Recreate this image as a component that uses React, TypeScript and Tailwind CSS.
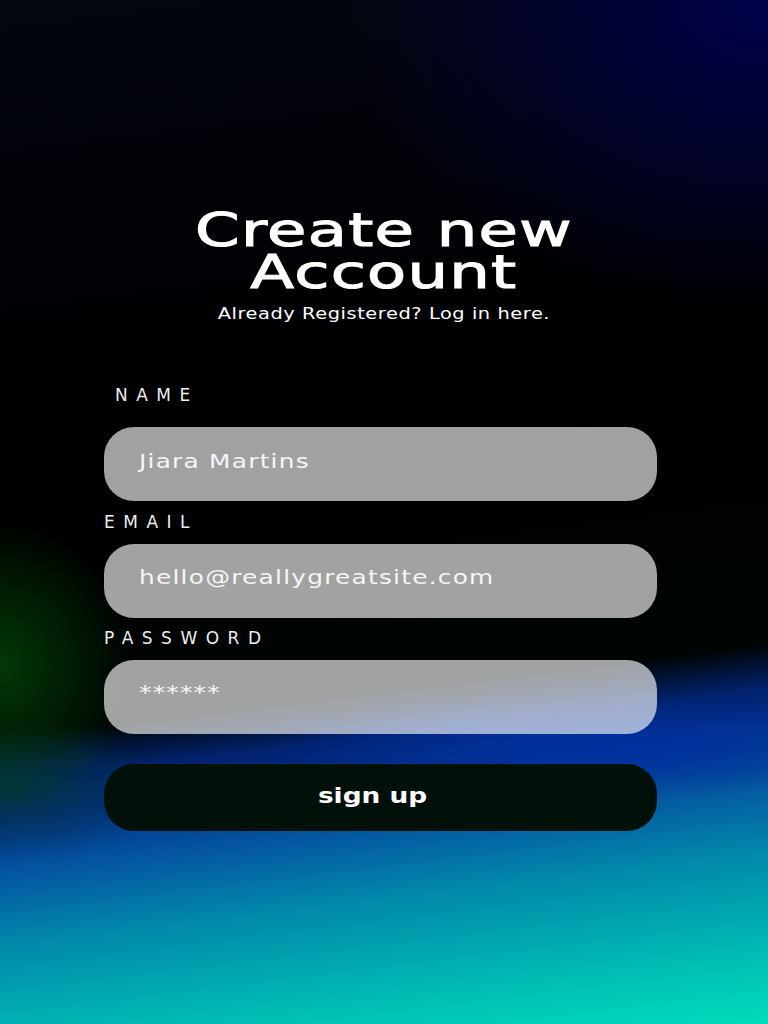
import React from "react";

function Field({ label, value, first, small }: { label: string; value: string; first?: boolean; small?: boolean }) {
  return (
    <div className="flex flex-col">
      <div className={"text-[17px] leading-[20px] tracking-[0.5em] text-white/95 " + (first ? "ml-[11px] mb-[10px]" : "")}>{label}</div>
      <div className="mt-[12px] h-[74px] rounded-[30px] bg-white/[0.63] flex items-center pl-[35px] overflow-hidden">
        <span
          className={
            "inline-block origin-left scale-x-[1.24] tracking-[0.05em] text-[#f6f6f6] text-[20px] leading-[28px] " +
            (small ? "-mt-[10px] text-[18px]" : "-mt-[7px]")
          }
        >
          {value}
        </span>
      </div>
    </div>
  );
}

export default function App() {
  return (
    <div className="relative w-full h-[1024px] overflow-hidden text-white font-['DejaVu_Sans',sans-serif] bg-[radial-gradient(ellipse_55%_30%_at_100%_0%,#00004a_0%,transparent_100%),radial-gradient(ellipse_17%_14%_at_0%_65%,#033806_0%,transparent_100%),radial-gradient(ellipse_22%_7%_at_0%_77%,#03363e_0%,transparent_100%),radial-gradient(ellipse_42%_5%_at_78%_73%,#0030a0_0%,transparent_100%),linear-gradient(173deg,#03050f_0%,#000000_40%,#000503_66%,#01226e_70%,#02308c_73.5%,#0458a0_78.5%,#0288aa_84.5%,#00a8b0_90%,#00c4b4_95%,#00dcbc_100%)]">
      <div className="flex flex-col pt-[209px]">
        <h1 className="text-center text-[46px] leading-[42px] font-normal">
          <span className="inline-block scale-x-[1.39] tracking-[0.02em] [-webkit-text-stroke:1.1px_#fff]">
            Create new
            <br />
            Account
          </span>
        </h1>
        <p className="mt-[11px] text-center text-[15px] leading-[20px]">
          <span className="inline-block scale-x-[1.29] tracking-[0.03em]">Already Registered? Log in here.</span>
        </p>
        <div className="mt-[61px] ml-[104px] w-[553px] flex flex-col gap-[10.5px]">
          <Field label="NAME" value="Jiara Martins" first />
          <Field label="EMAIL" value="hello@reallygreatsite.com" />
          <Field label="PASSWORD" value="******" small />
          <button className="mt-[19px] h-[67px] rounded-[30px] bg-[#02100a] flex items-center justify-center">
            <span className="inline-block scale-x-[1.2] text-[22px] font-bold leading-[28px] -ml-[16px] -mt-[2px]">sign up</span>
          </button>
        </div>
      </div>
    </div>
  );
}
